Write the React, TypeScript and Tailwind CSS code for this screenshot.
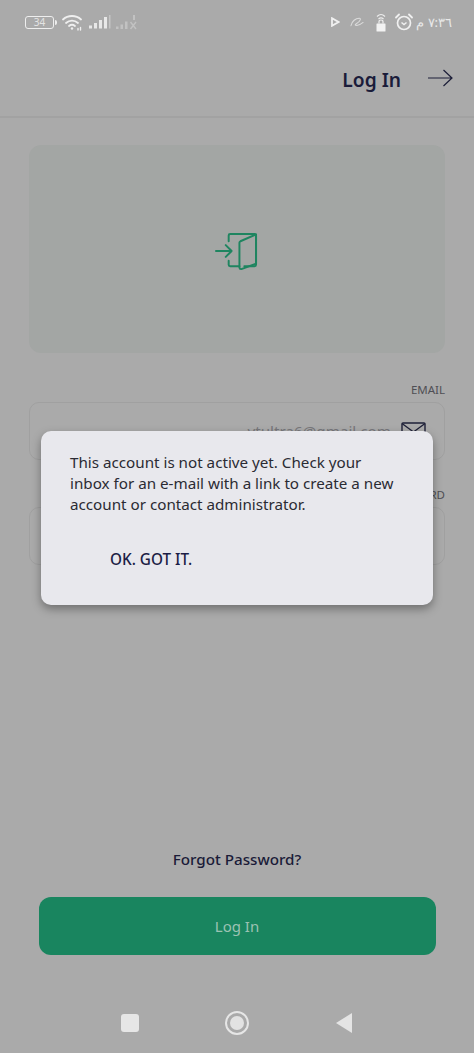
import React from 'react';

const font = "font-['Noto_Sans','Open_Sans',sans-serif]";

function StatusLeft() {
  return (
    <div className="flex items-center gap-[5px]">
      <div className="flex items-center">
        <div className="w-[29px] h-[13px] rounded-[3px] border border-[#eeeeee] flex items-center justify-center text-[10px] leading-none text-[#e4e4e4]">
          34
        </div>
        <div className="w-[2px] h-[5px] rounded-r-sm bg-[#eeeeee] ml-px" />
      </div>
      <svg width="22" height="17" viewBox="0 0 22 17" fill="none" stroke="#efefef" strokeWidth="1.8" strokeLinecap="round">
        <path d="M1 5.5C6 .8 14 .8 19 5.5" />
        <path d="M4 9C7.500 5.800 12.500 5.800 16 9" />
        <path d="M7 12c2-1.600 4-1.600 6 0" />
        <circle cx="10" cy="14.500" r="1.200" fill="#efefef" stroke="none" />
        <path d="M16 14.500v1.500M18.500 13.500v2.500" strokeWidth="1.400" />
      </svg>
      <svg width="22" height="14" viewBox="0 0 22 14" fill="#e8e8e8">
        <rect x="0" y="10.500" width="3" height="3" />
        <rect x="5" y="8" width="3" height="5.500" />
        <rect x="10" y="5" width="3" height="8.500" />
        <rect x="15" y="2" width="3" height="11.500" />
        <rect x="20" y="0" width="1.500" height="13.500" fill="#c4c4c4" />
      </svg>
      <svg width="22" height="15" viewBox="0 0 22 15" fill="#c2c2c2">
        <rect x="0" y="11.500" width="2.500" height="2.500" />
        <rect x="4.500" y="9.500" width="2.500" height="4.500" />
        <rect x="9" y="6.500" width="2.500" height="7.500" />
        <path d="M14.500 7l5.500 7M20 7l-5.500 7" stroke="#c2c2c2" strokeWidth="1.400" fill="none" />
        <rect x="17" y="0" width="2" height="5" />
      </svg>
    </div>
  );
}

function StatusRight() {
  return (
    <div className="flex items-center">
      <svg width="9" height="10" viewBox="0 0 9 10" fill="none" stroke="#f0f0f0" strokeWidth="1.800" className="mr-[10px]">
        <path d="M1 1.200v7.600L7.500 5z" />
      </svg>
      <svg width="15" height="10" viewBox="0 0 16 10" fill="none" stroke="#dcdcdc" strokeWidth="1.100" strokeLinecap="round" className="mr-[10px]">
        <path d="M1 9C2 4 6 1 10 1c2 0 1 3-2 5-2 1.500-3 2-2 2.500 2 .5 5-.5 8-3" />
      </svg>
      <svg width="12" height="19" viewBox="0 0 12 19" fill="none" className="mr-[8px]">
        <path d="M2 3.500C4.500 1 7.500 1 10 3.500M3.500 6c1.500-1.400 3.500-1.400 5 0" stroke="#eeeeee" strokeWidth="1.100" />
        <path d="M4 10.500V8.800c0-2.400 4-2.400 4 0v1.700" stroke="#eeeeee" strokeWidth="1.200" />
        <rect x="1.500" y="10.500" width="9" height="8" rx="0.500" fill="#f2f2f2" />
      </svg>
      <svg width="18" height="18" viewBox="0 0 18 18" fill="none" stroke="#f0f0f0" className="mr-[3px]">
        <circle cx="9" cy="10" r="6.500" strokeWidth="1.700" />
        <path d="M1 4.500 4 1.500M17 4.500l-3-3" strokeWidth="1.800" strokeLinecap="round" />
        <path d="M6.500 9.500 9 11.500l2.500-2" strokeWidth="1.500" />
      </svg>
      <span dir="rtl" className="text-[13px] leading-none tracking-[0.5px] text-[#e8e8e8]">
        ٧:٣٦ م
      </span>
    </div>
  );
}

function Field({ label, value, children }: { label: string; value?: string; children?: React.ReactNode }) {
  return (
    <div className="flex flex-col">
      <div className="text-right text-[11.500px] leading-[14px] text-[#4f4f55] h-[14px]">{label}</div>
      <div className="mt-[5px] h-[58px] rounded-[10px] border border-[#a0a0a0] flex items-center justify-end pl-4 pr-[18px] gap-[10px]">
        {value && <span className="text-[15.200px] text-[#77777b]">{value}</span>}
        {children}
      </div>
    </div>
  );
}

export default function App() {
  return (
    <div className={`${font} relative w-[474px] h-[1053px] overflow-hidden bg-[#aaaaaa] flex flex-col`}>
      {/* status bar + header */}
      <div className="h-[118px] border-b-2 border-[#a2a2a2] flex flex-col shrink-0">
        <div className="flex items-center justify-between pl-[25px] pr-[22px] pt-[12px] h-[32px]">
          <StatusLeft />
          <StatusRight />
        </div>
        <div className="flex items-center justify-end pr-[21px] mt-[34px] gap-[27px]">
          <span className="text-[19.200px] leading-[28px] font-semibold text-[#1a1c3a]">Log In</span>
          <svg width="25" height="18" viewBox="0 0 25 18" fill="none" stroke="#1c1e38" strokeWidth="1.200" className="-mt-[4px]">
            <path d="M0 9h24M15.500 1l8.500 8-8.500 8" />
          </svg>
        </div>
      </div>

      <div className="px-[29px] pt-[27px] flex flex-col flex-1">
        <div className="h-[208px] rounded-xl bg-[#a3a6a4] flex items-center justify-center">
          <svg width="43" height="40" viewBox="0 0 44 40" fill="none" stroke="#1f8560" strokeWidth="2" strokeLinecap="round" strokeLinejoin="round" className="mt-[6px] mr-[2px]">
            <path d="M1 19h16M11 13l6 6-6 6" />
            <path d="M14 9V3a1.500 1.500 0 0 1 1.500-1.500H40.500A1.500 1.500 0 0 1 42 3v30a1.500 1.500 0 0 1-1.500 1.500H30M14 29v4a1.500 1.500 0 0 0 1.500 1.500H25" />
            <path d="M25 11a2 2 0 0 1 1-2L42 2v30l-15 5.500a2 2 0 0 1-2-1.500z" />
          </svg>
        </div>

        <div className="mt-[30px]">
          <Field label="EMAIL" value="ytultra6@gmail.com">
            <svg width="25" height="18" viewBox="0 0 25 18" fill="none" stroke="#1e2038" strokeWidth="1.400">
              <rect x="1" y="1" width="23" height="16" rx="1" />
              <path d="M1 1.500 12.500 10 24 1.500" />
            </svg>
          </Field>
        </div>
        <div className="mt-[28px]">
          <Field label="PASSWORD" />
        </div>

        <div className="mt-auto flex flex-col items-center pb-[98px]">
          <button className="text-[15.200px] leading-5 font-medium text-[#1a1b38] translate-y-px">Forgot Password?</button>
          <button className="mt-[29px] w-[397px] h-[58px] rounded-xl bg-[#19855f] text-[15px] leading-[58px] text-[#9cc2b3]">
            Log In
          </button>
        </div>
      </div>

      {/* android nav */}
      <div className="absolute bottom-[16px] left-0 w-full h-[28px]">
        <div className="flex items-center justify-center h-full gap-[86px] pr-[1px]">
          <div className="w-[18px] h-[18px] rounded-[3px] bg-[#e6e6e6]" />
          <div className="w-[24px] h-[24px] rounded-full border-[2px] border-[#e6e6e6] flex items-center justify-center">
            <div className="w-[14px] h-[14px] rounded-full bg-[#e2e2e2]" />
          </div>
          <svg width="18" height="22" viewBox="0 0 18 22" fill="#e4e4e4">
            <path d="M17 1v20L1 11z" />
          </svg>
        </div>
      </div>

      {/* dialog */}
      <div className="absolute left-[41px] top-[431px] w-[392px] h-[174px] rounded-[10px] bg-[#e8e8ed] shadow-[0_4px_10px_rgba(0,0,0,0.35)] pl-[29px] pr-[35px] pt-[21px]">
        <p className="text-[15.200px] leading-[21px] text-[#2b2b33]">
          This account is not active yet. Check your inbox for an e-mail with a link to create a new account or contact administrator.
        </p>
        <button className="mt-[34px] ml-[40px] text-[15.300px] leading-5 font-medium text-[#1c1d45]">OK. GOT IT.</button>
      </div>
    </div>
  );
}
